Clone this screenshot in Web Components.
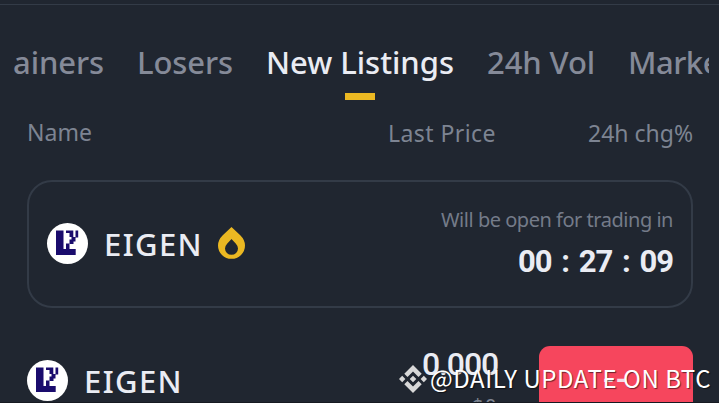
<!DOCTYPE html>
<html lang="en">
<head>
<meta charset="utf-8">
<title>Markets</title>
<style>
  html, body { margin: 0; height: 403px; overflow: hidden; background: #202630; }
</style>
</head>
<body>
<market-page></market-page>

<script>
// Text that is letter-spaced to an exact advance width
class FitText extends HTMLElement {
  constructor() {
    super();
    this.attachShadow({ mode: 'open' });
    this.shadowRoot.innerHTML = `<style>
        :host { display: block; flex: none; }
        span { display: inline-block; white-space: nowrap; vertical-align: top; }
      </style><span><slot></slot></span>`;
  }

  connectedCallback() {
    const width = Number(this.getAttribute('width'));
    const label = this.shadowRoot.querySelector('span');
    const natural = label.getBoundingClientRect().width;
    const count = this.textContent.length;
    this.style.width = `${width}px`;
    label.style.letterSpacing = `${(width - natural) / count}px`;
  }
}

class TabItem extends HTMLElement {
  constructor() {
    super();
    this.attachShadow({ mode: 'open' });
    this.shadowRoot.innerHTML = `
      <style>
        :host {
          display: flex;
          flex-direction: column;
          align-items: center;
          flex: none;
          color: #858a98;
          font-size: 31px;
          font-weight: 500;
          line-height: 40px;
        }
        :host([active]) { color: #eaecf3; }
        i { display: none; width: 30px; height: 7px; margin-top: 11px; background: #ebb822; }
        :host([active]) i { display: block; }
      </style>
      <slot></slot>
      <i></i>
    `;
  }
}

class EigenLogo extends HTMLElement {
  constructor() {
    super();
    this.attachShadow({ mode: 'open' });
    this.shadowRoot.innerHTML = `
      <style>
        :host { display: block; flex: none; width: 41px; height: 41px; }
        svg { display: block; }
      </style>
      <svg width="41" height="41" viewBox="0 0 41 41">
        <circle cx="20.5" cy="20.5" r="20.5" fill="#fff"/>
        <path fill="#1a0c6d" d="M9 7.500h7.500v18.500H19v-5.500h3.500v5.500h6.200v6H9z"/>
        <path fill="#1a0c6d" d="M19 7.500h7.300v6.500H28.500v4.500h-2v2.500h-4v-4.500h2v-2.500h-2v-4H19zM28.500 7.500h2.700v7h-2.700z"/>
      </svg>
    `;
  }
}

class FlameIcon extends HTMLElement {
  constructor() {
    super();
    this.attachShadow({ mode: 'open' });
    this.shadowRoot.innerHTML = `
      <style>
        :host { display: block; flex: none; width: 27px; height: 32px; margin-bottom: 2px; }
        svg { display: block; }
      </style>
      <svg width="27" height="32" viewBox="0 0 27 32">
        <path fill="#ebb822" fill-rule="evenodd" d="M13.500 0 22.500 8.500Q27 13 27 18.500A13.500 13.300 0 0 1 0 18.500Q0 13 4.500 8.500ZM13.500 12 9.300 16.500Q7 19 7 21.500A6.500 6.300 0 0 0 20 21.500Q20 19 17.700 16.500Z"/>
      </svg>
    `;
  }
}

class CoinName extends HTMLElement {
  constructor() {
    super();
    this.attachShadow({ mode: 'open' });
    this.shadowRoot.innerHTML = `
      <style>
        :host {
          display: flex;
          align-items: center;
          color: #eaecf3;
          font-size: 31px;
          font-weight: 500;
          line-height: 40px;
        }
        fit-text { margin: 0 15px 0 16px; }
      </style>
      <eigen-logo></eigen-logo>
      <fit-text width="99"></fit-text>
      <slot></slot>
    `;
    this.shadowRoot.querySelector('fit-text').textContent = this.getAttribute('symbol');
  }
}

class LaunchCard extends HTMLElement {
  constructor() {
    super();
    this.attachShadow({ mode: 'open' });
    this.shadowRoot.innerHTML = `
      <style>
        :host {
          display: flex;
          justify-content: space-between;
          box-sizing: border-box;
          height: 128px;
          padding: 24px 18px 0;
          border: 2px solid #333b47;
          border-radius: 25px;
        }
        .coin { margin-top: 17px; }
        .opening { display: flex; flex-direction: column; align-items: flex-end; }
      </style>
      <div class="coin"><slot name="coin"></slot></div>
      <div class="opening"><slot></slot></div>
    `;
  }
}

class WaterMark extends HTMLElement {
  constructor() {
    super();
    this.attachShadow({ mode: 'open' });
    this.shadowRoot.innerHTML = `
      <style>
        :host {
          position: absolute;
          left: 399px;
          top: 360px;
          display: flex;
          align-items: center;
          gap: 3px;
          color: #fff;
          font: 400 24px/36px "Noto Sans CJK SC", "Noto Sans", sans-serif;
          text-shadow: 1px 1px 1px rgba(0, 0, 0, .55);
        }
        svg { flex: none; margin-top: 1px; }
      </style>
      <svg width="28" height="28" viewBox="0 0 28 28" fill="#d8d8d8">
        <path d="M14 0 22.700 8.700 19.500 11.900 14 6.400 8.500 11.900 5.300 8.700Z"/>
        <path d="M14 28 5.300 19.300 8.500 16.100 14 21.600 19.500 16.100 22.700 19.300Z"/>
        <path d="M14 10.700 17.300 14 14 17.300 10.700 14ZM3.200 10.800 6.400 14 3.200 17.200 0 14ZM24.800 10.800 28 14 24.800 17.200 21.600 14Z"/>
      </svg>
      <slot></slot>
    `;
  }
}

class MarketPage extends HTMLElement {
  constructor() {
    super();
    this.attachShadow({ mode: 'open' });
    this.shadowRoot.innerHTML = `
      <style>
        :host {
          display: block;
          position: relative;
          box-sizing: border-box;
          width: 719px;
          height: 403px;
          padding-top: 4px;
          overflow: hidden;
          background: #202630;
          border-bottom: 1px solid #161a21;
          font-family: "Noto Sans", sans-serif;
        }
        header { border-top: 1px solid #333b47; }
        nav {
          display: flex;
          gap: 33px;
          box-sizing: border-box;
          height: 112px;
          margin-right: 10px;
          padding: 37px 0 0 13px;
          overflow: hidden;
        }
        .columns {
          display: flex;
          padding: 0 26px 0 27px;
          color: #7d8492;
          font-size: 23px;
          line-height: 30px;
        }
        .columns .price { margin: 1px 92px 0 auto; }
        .columns .change { margin-top: 1px; }
        launch-card { margin: 32px 26px 0 27px; }
        .note { color: #747b89; font-size: 20px; line-height: 28px; }
        .timer {
          color: #eaecf3;
          font: 700 31px/40px Roboto, sans-serif;
          word-spacing: 3px;
          margin-top: 8px;
        }
        .row { display: flex; align-items: flex-start; margin: 38px 26px 0 27px; }
        .row coin-name { margin-top: 14px; }
        .quote { display: flex; flex-direction: column; align-items: flex-end; margin: 0 41px 0 auto; }
        .value { color: #eaecf3; font: 500 32px/36px Roboto, sans-serif; }
        .fiat { color: #7d8492; font-size: 20px; line-height: 28px; margin-top: 10px; }
        .pill {
          display: flex;
          justify-content: center;
          width: 154px;
          height: 70px;
          border-radius: 11px;
          background: #f6465d;
          color: #f5dbe6;
          font-size: 34px;
          font-weight: 500;
          line-height: 63px;
        }
      </style>
      <header>
        <nav>
          <tab-item><fit-text width="91">ainers</fit-text></tab-item>
          <tab-item><fit-text width="96">Losers</fit-text></tab-item>
          <tab-item active><fit-text width="188">New Listings</fit-text></tab-item>
          <tab-item><fit-text width="108">24h Vol</fit-text></tab-item>
          <tab-item><fit-text width="92">Marke</fit-text></tab-item>
        </nav>
      </header>
      <div class="columns">
        <fit-text width="65">Name</fit-text>
        <fit-text class="price" width="108">Last Price</fit-text>
        <fit-text class="change" width="105">24h chg%</fit-text>
      </div>
      <launch-card>
        <coin-name slot="coin" symbol="EIGEN"><flame-icon></flame-icon></coin-name>
        <fit-text class="note" width="232">Will be open for trading in</fit-text>
        <fit-text class="timer" width="155">00 : 27 : 09</fit-text>
      </launch-card>
      <div class="row">
        <coin-name symbol="EIGEN"></coin-name>
        <div class="quote">
          <fit-text class="value" width="76">0.000</fit-text>
          <fit-text class="fiat" width="26">$0</fit-text>
        </div>
        <div class="pill"><fit-text width="26">--</fit-text></div>
      </div>
      <water-mark><fit-text width="281">@DAILY UPDATE ON BTC</fit-text></water-mark>
    `;
  }
}

customElements.define('market-page', MarketPage);
customElements.define('tab-item', TabItem);
customElements.define('eigen-logo', EigenLogo);
customElements.define('flame-icon', FlameIcon);
customElements.define('coin-name', CoinName);
customElements.define('launch-card', LaunchCard);
customElements.define('water-mark', WaterMark);
// Last, so that every text is in its place when it is measured
customElements.define('fit-text', FitText);
</script>
</body>
</html>
